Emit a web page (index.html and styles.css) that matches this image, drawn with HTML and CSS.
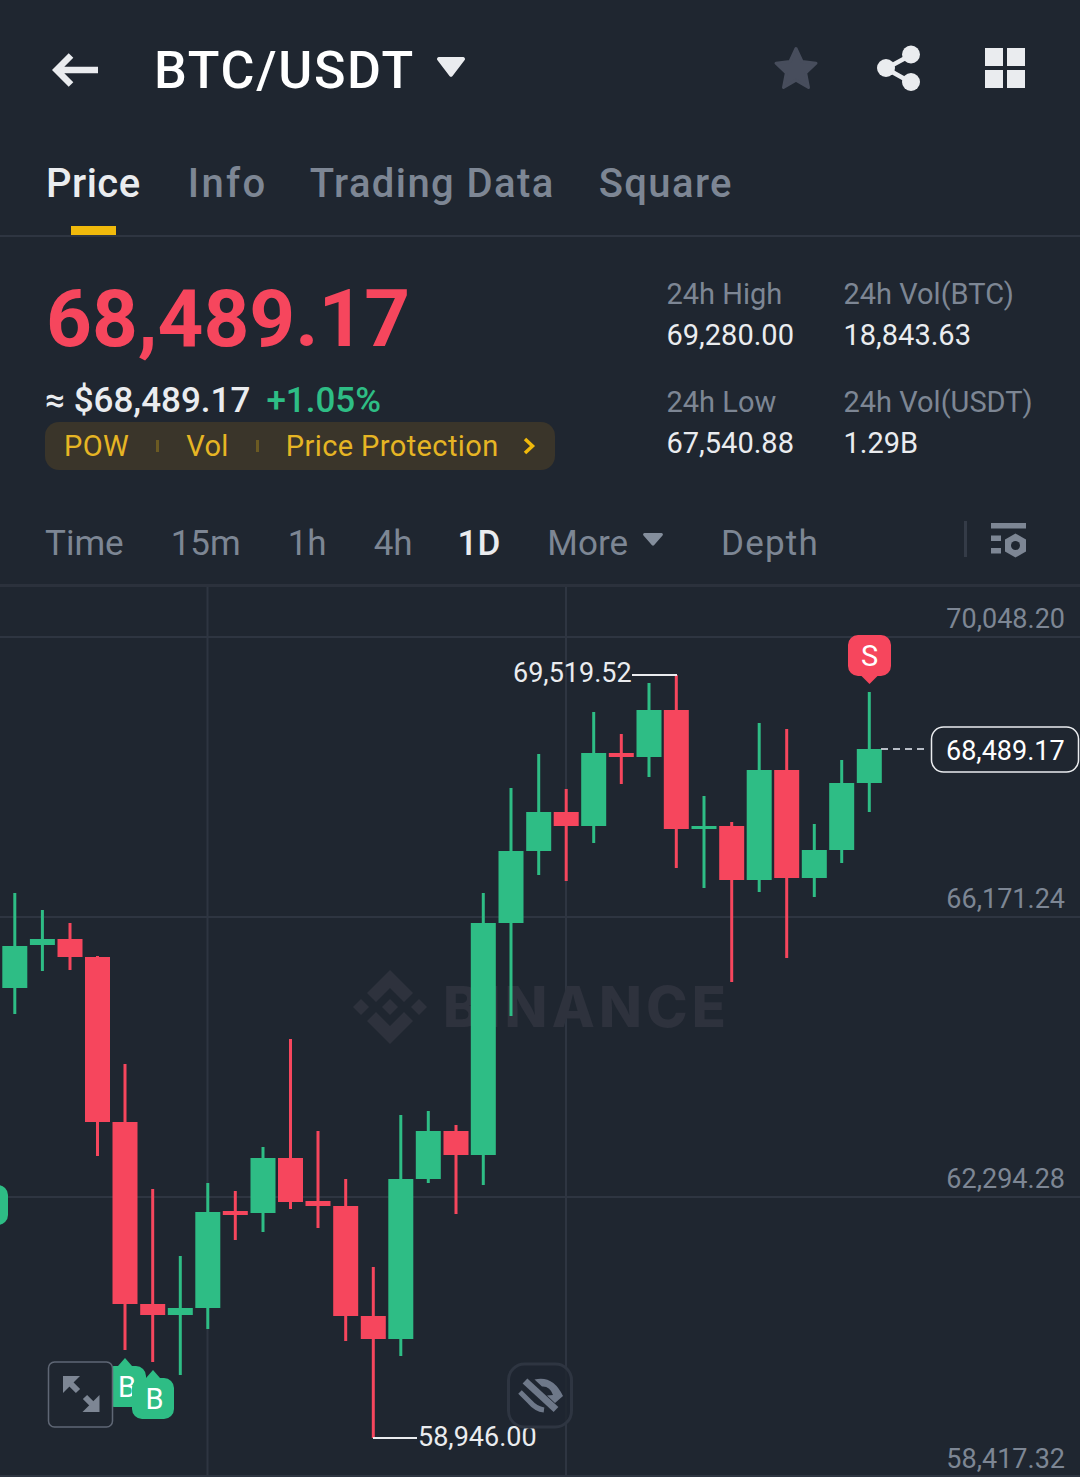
FILE: index.html
```html
<!DOCTYPE html>
<html lang="en">
<head>
    <meta charset="UTF-8">
    <meta name="viewport" content="width=device-width, initial-scale=1.0">
    <title>BTC/USDT</title>
    <link rel="stylesheet" href="styles.css">
</head>
<body>

    <!-- Top bar -->
    <header class="topbar">
        <svg class="icon-back" width="46" height="36" viewBox="0 0 46 36">
            <path d="M46 18H5M19 3.500 4.500 18 19 32.500" fill="none" stroke="#eaecef" stroke-width="6.500"/>
        </svg>
        <h1 class="pair">BTC/USDT</h1>
        <svg class="icon-caret" width="28" height="20" viewBox="0 0 28 20">
            <path d="M2 0h24a2 2 0 0 1 1.500 3.300L15.500 19a2 2 0 0 1-3 0L.5 3.300A2 2 0 0 1 2 0z" fill="#eaecef"/>
        </svg>
        <div class="top-actions">
            <svg width="46" height="46" viewBox="0 0 46 46">
                <path d="M23 3.500 29 16.500 43 18.200 32.700 28 35.500 42.500 23 35.300 10.500 42.500 13.300 28 3 18.200 17 16.500z" fill="#474d5c" stroke="#474d5c" stroke-width="3" stroke-linejoin="round"/>
            </svg>
            <svg width="44" height="46" viewBox="0 0 44 46">
                <path d="M34 10 9 23.500 34 37.500" fill="none" stroke="#eaecef" stroke-width="4.500"/>
                <circle cx="34" cy="9.500" r="9" fill="#eaecef"/>
                <circle cx="9" cy="23" r="9" fill="#eaecef"/>
                <circle cx="34" cy="37" r="9" fill="#eaecef"/>
            </svg>
            <div class="icon-grid"><span></span><span></span><span></span><span></span></div>
        </div>
    </header>

    <!-- Tabs -->
    <nav class="tabs">
        <a class="tab active">Price</a>
        <a class="tab tab-info">Info</a>
        <a class="tab">Trading Data</a>
        <a class="tab">Square</a>
    </nav>

    <!-- Price block -->
    <section class="summary">
        <div class="summary-left">
            <div class="last-price">68,489.17</div>
            <div class="fiat-line">
                <span class="fiat">≈ $68,489.17</span>
                <span class="change">+1.05%</span>
            </div>
            <div class="tags">
                <span>POW</span>
                <i class="tag-sep"></i>
                <span>Vol</span>
                <i class="tag-sep"></i>
                <span>Price Protection</span>
                <svg class="tag-arrow" width="14" height="18" viewBox="0 0 14 18">
                    <path d="M3 2l7.500 7L3 16" fill="none" stroke="#f0b90b" stroke-width="3.500"/>
                </svg>
            </div>
        </div>
        <div class="stats">
            <div class="stat"><span class="stat-label">24h High</span><span class="stat-value">69,280.00</span></div>
            <div class="stat"><span class="stat-label">24h Vol(BTC)</span><span class="stat-value">18,843.63</span></div>
            <div class="stat"><span class="stat-label">24h Low</span><span class="stat-value">67,540.88</span></div>
            <div class="stat"><span class="stat-label">24h Vol(USDT)</span><span class="stat-value">1.29B</span></div>
        </div>
    </section>

    <!-- Timeframes -->
    <div class="intervals">
        <a>Time</a>
        <a>15m</a>
        <a>1h</a>
        <a>4h</a>
        <a class="active">1D</a>
        <a class="more">More
            <svg width="20" height="13" viewBox="0 0 20 13">
                <path d="M1.500 0h17a1.500 1.500 0 0 1 1 2.500L11 12.300a1.500 1.500 0 0 1-2 0L.5 2.500A1.500 1.500 0 0 1 1.500 0z" fill="#848e9c"/>
            </svg>
        </a>
        <a class="depth">Depth</a>
        <i class="interval-sep"></i>
        <svg class="icon-settings" width="38" height="38" viewBox="0 0 38 38">
            <path d="M1 3h35v5.500H1zM1 15.500h10v5.500H1zM1 28h10v5.500H1z" fill="#7d8694"/>
            <path d="M25.500 13.500 36 19.500v12L25.500 37.500 15 31.500v-12z" fill="#7d8694"/>
            <circle cx="25.500" cy="25.500" r="4.500" fill="#1f2630"/>
        </svg>
    </div>

    <!-- Chart, viewBox uses page coordinates -->
    <svg class="chart" width="1080" height="890" viewBox="0 587 1080 890">
        <g class="grid">
            <path d="M0 637H1080M0 917H1080M0 1197H1080M0 1476H1080M207.500 585V1477M566 585V1477"/>
        </g>

        <g class="watermark" transform="translate(390 1007)">
            <path d="M0-37 23-14 14-5 0-19-14-5-23-14zM0 37 23 14 14 5 0 19-14 5-23 14zM0-8 8 0 0 8-8 0zM-29-8-21 0-29 8-37 0zM29-8 37 0 29 8 21 0z"/>
        </g>
        <text class="watermark-text" x="443" y="1027" textLength="283">BINANCE</text>

        <g class="up"><line x1="14.800" x2="14.800" y1="893" y2="1014"/><rect x="2.300" y="946" width="25" height="42"/></g>
        <g class="up"><line x1="42.400" x2="42.400" y1="910" y2="971"/><rect x="29.900" y="939" width="25" height="6"/></g>
        <g class="dn"><line x1="70" x2="70" y1="923" y2="970"/><rect x="57.500" y="939" width="25" height="18"/></g>
        <g class="dn"><line x1="97.500" x2="97.500" y1="956" y2="1156"/><rect x="85" y="957" width="25" height="165"/></g>
        <g class="dn"><line x1="125" x2="125" y1="1064" y2="1350"/><rect x="112.500" y="1122" width="25" height="182"/></g>
        <g class="dn"><line x1="152.700" x2="152.700" y1="1189" y2="1362"/><rect x="140.200" y="1304" width="25" height="11"/></g>
        <g class="up"><line x1="180.300" x2="180.300" y1="1256" y2="1375"/><rect x="167.800" y="1308" width="25" height="7"/></g>
        <g class="up"><line x1="207.800" x2="207.800" y1="1183" y2="1329"/><rect x="195.300" y="1212" width="25" height="96"/></g>
        <g class="dn"><line x1="235.300" x2="235.300" y1="1191" y2="1240"/><rect x="222.800" y="1211" width="25" height="4"/></g>
        <g class="up"><line x1="263" x2="263" y1="1147" y2="1232"/><rect x="250.500" y="1158" width="25" height="55"/></g>
        <g class="dn"><line x1="290.500" x2="290.500" y1="1039" y2="1209"/><rect x="278" y="1158" width="25" height="44"/></g>
        <g class="dn"><line x1="318" x2="318" y1="1131" y2="1228"/><rect x="305.500" y="1201" width="25" height="5"/></g>
        <g class="dn"><line x1="345.700" x2="345.700" y1="1179" y2="1341"/><rect x="333.200" y="1206" width="25" height="110"/></g>
        <g class="dn"><line x1="373.300" x2="373.300" y1="1267" y2="1438"/><rect x="360.800" y="1316" width="25" height="23"/></g>
        <g class="up"><line x1="400.800" x2="400.800" y1="1115" y2="1356"/><rect x="388.300" y="1179" width="25" height="160"/></g>
        <g class="up"><line x1="428.300" x2="428.300" y1="1111" y2="1183"/><rect x="415.800" y="1131" width="25" height="48"/></g>
        <g class="dn"><line x1="456" x2="456" y1="1125" y2="1214"/><rect x="443.500" y="1131" width="25" height="24"/></g>
        <g class="up"><line x1="483.300" x2="483.300" y1="893" y2="1185"/><rect x="470.800" y="923" width="25" height="232"/></g>
        <g class="up"><line x1="511" x2="511" y1="788" y2="1016"/><rect x="498.500" y="851" width="25" height="72"/></g>
        <g class="up"><line x1="538.700" x2="538.700" y1="754" y2="875"/><rect x="526.200" y="812" width="25" height="39"/></g>
        <g class="dn"><line x1="566.200" x2="566.200" y1="789" y2="881"/><rect x="553.700" y="812" width="25" height="14"/></g>
        <g class="up"><line x1="593.700" x2="593.700" y1="712" y2="843"/><rect x="581.200" y="753" width="25" height="73"/></g>
        <g class="dn"><line x1="621.300" x2="621.300" y1="734" y2="784"/><rect x="608.800" y="753" width="25" height="4"/></g>
        <g class="up"><line x1="649" x2="649" y1="683" y2="777"/><rect x="636.500" y="710" width="25" height="47"/></g>
        <g class="dn"><line x1="676.300" x2="676.300" y1="675" y2="868"/><rect x="663.800" y="710" width="25" height="119"/></g>
        <g class="up"><line x1="704" x2="704" y1="796" y2="888"/><rect x="691.500" y="826" width="25" height="3"/></g>
        <g class="dn"><line x1="731.700" x2="731.700" y1="822" y2="982"/><rect x="719.200" y="826" width="25" height="54"/></g>
        <g class="up"><line x1="759.200" x2="759.200" y1="723" y2="892"/><rect x="746.700" y="770" width="25" height="110"/></g>
        <g class="dn"><line x1="786.700" x2="786.700" y1="729" y2="958"/><rect x="774.200" y="770" width="25" height="108"/></g>
        <g class="up"><line x1="814.300" x2="814.300" y1="824" y2="897"/><rect x="801.800" y="850" width="25" height="28"/></g>
        <g class="up"><line x1="841.700" x2="841.700" y1="760" y2="863"/><rect x="829.200" y="783" width="25" height="67"/></g>
        <g class="up"><line x1="869.300" x2="869.300" y1="692" y2="812"/><rect x="856.800" y="749" width="25" height="34"/></g>

        <!-- Axis labels -->
        <text class="axis" x="1065" y="628">70,048.20</text>
        <text class="axis" x="1065" y="908">66,171.24</text>
        <text class="axis" x="1065" y="1188">62,294.28</text>
        <text class="axis" x="1065" y="1468">58,417.32</text>

        <!-- High and low -->
        <path class="hl-line" d="M632 675H677M373 1438H417"/>
        <text class="hl" x="513" y="682">69,519.52</text>
        <text class="hl" x="418" y="1446">58,946.00</text>

        <!-- Last price -->
        <path class="last-dash" d="M881 749H925"/>
        <rect class="last-box" x="931.500" y="727" width="147" height="45" rx="12"/>
        <text class="last-text" x="946" y="760">68,489.17</text>

        <!-- Trade markers -->
        <rect class="mark-up" x="-30" y="1185" width="38" height="40" rx="10"/>
        <path class="mark-dn" d="M858 635h23a10 10 0 0 1 10 10v21a10 10 0 0 1-10 10h-3.500l-8 8-8-8H858a10 10 0 0 1-10-10v-21a10 10 0 0 1 10-10z"/>
        <text class="mark-text" x="869.500" y="666">S</text>
        <path class="mark-up" d="M114 1366h4l7-8 7 8h4a10 10 0 0 1 10 10v21a10 10 0 0 1-10 10h-22a10 10 0 0 1-10-10v-21a10 10 0 0 1 10-10z"/>
        <text class="mark-text" x="127" y="1397">B</text>
        <path class="mark-up" d="M142 1378h4l7-8 7 8h4a10 10 0 0 1 10 10v21a10 10 0 0 1-10 10h-22a10 10 0 0 1-10-10v-21a10 10 0 0 1 10-10z"/>
        <text class="mark-text" x="154.500" y="1409">B</text>

        <!-- Fullscreen button -->
        <rect class="btn-full" x="48.500" y="1362" width="64" height="65" rx="6"/>
        <path class="btn-icon" d="M63 1376h17l-17 17zM99.500 1412h-17l17-17z"/>
        <path class="btn-stroke" d="M71 1384 78 1391M85 1397 92 1404"/>

        <!-- Hide button -->
        <rect class="btn-hide" x="508.500" y="1364" width="63" height="63" rx="16"/>
        <path class="hide-stroke" d="M525 1381 556 1409.500"/>
        <path class="hide-icon" d="M534.500 1379.500Q553 1375 563 1396L555 1403 547 1395.500 553 1395Q550 1386 542 1386.500z"/>
        <path class="hide-thin" d="M520 1392 530 1402Q536 1409 544 1410"/>
    </svg>

</body>
</html>
```

FILE: styles.css
```css
* {
    box-sizing: border-box;
}

body {
    margin: 0;
    width: 1080px;
    height: 1477px;
    overflow: hidden;
    background-color: #1f2630;
    font-family: Roboto, "Liberation Sans", sans-serif;
    color: #eaecef;
}

.topbar {
    display: flex;
    align-items: center;
    height: 140px;
    padding: 0 55px 0 52px;
}

.icon-back {
    margin-right: 56px;
}

.pair {
    margin: 0;
    font-size: 52px;
    font-weight: 500;
    letter-spacing: 1.700px;
    color: #fff;
}

.icon-caret {
    margin: -6px 0 0 22px;
}

.top-actions {
    display: flex;
    align-items: center;
    gap: 58px;
    margin: -4px 0 0 auto;
}

.icon-grid {
    display: grid;
    grid-template-columns: 18px 18px;
    grid-template-rows: 18px 18px;
    gap: 4px;
    margin-left: 6px;
}

.icon-grid span {
    background-color: #eaecef;
}

.tabs {
    display: flex;
    gap: 44px;
    height: 97px;
    padding-left: 46px;
    border-bottom: 2px solid #2e3541;
}

.tab {
    position: relative;
    font-size: 40px;
    font-weight: 500;
    letter-spacing: 1.400px;
    line-height: 88px;
    color: #7d8694;
}

.tab-info {
    margin-right: -2px;
    letter-spacing: 2.400px;
}

.tab.active {
    margin-right: 3px;
    letter-spacing: 0.500px;
    color: #eaecef;
}

.tab.active::after {
    content: "";
    position: absolute;
    left: 25px;
    bottom: 0;
    width: 45px;
    height: 9px;
    background-color: #f0b90b;
}

.summary {
    display: flex;
    justify-content: space-between;
    height: 248px;
    padding: 0 46.500px 0 45px;
}

.last-price {
    margin: 38px 0 0 1px;
    font-size: 80px;
    font-weight: 700;
    line-height: 88px;
    color: #f6465d;
}

.fiat-line {
    display: flex;
    gap: 16px;
    margin-top: 17px;
    font-size: 35px;
    font-weight: 500;
    line-height: 42px;
}

.change {
    color: #2ebd85;
}

.tags {
    display: flex;
    align-items: center;
    gap: 27px;
    width: 510px;
    height: 48px;
    margin-top: 0;
    padding-left: 19px;
    border-radius: 14px;
    background-color: #3a352a;
    font-size: 29px;
    letter-spacing: 0.400px;
    color: #e6b524;
}

.tag-sep {
    width: 3px;
    height: 12px;
    background-color: #6b5a22;
}

.tag-arrow {
    margin-left: -4px;
}

.stats {
    display: grid;
    grid-template-columns: 177px 190px;
    grid-auto-rows: 108px;
    margin-top: 42px;
}

.stat {
    display: flex;
    flex-direction: column;
    gap: 11px;
    font-size: 29px;
    line-height: 30px;
}

.stat-label {
    color: #7d8694;
}

.intervals {
    display: flex;
    align-items: center;
    gap: 47px;
    height: 102px;
    padding: 17px 52.500px 0 45px;
    border-bottom: 3px solid #2b313c;
    font-size: 35px;
    color: #7d8694;
}

.intervals .active {
    margin-left: -2px;
    font-weight: 500;
    color: #eaecef;
}

.more {
    display: flex;
    align-items: center;
    gap: 15px;
}

.more svg {
    margin-top: -8px;
}

.depth {
    margin-left: 11px;
    letter-spacing: 1.200px;
}

.interval-sep {
    width: 3px;
    height: 36px;
    margin-left: auto;
    margin-top: -8px;
    background-color: #343b47;
}

.icon-settings {
    margin: -8px 0 0 -24.500px;
}

.chart {
    display: block;
}

.grid path {
    fill: none;
    stroke: #2e3541;
    stroke-width: 2;
}

.watermark path {
    fill: #2e323d;
}

.watermark-text {
    font-family: Inter, Roboto, sans-serif;
    font-size: 56px;
    font-weight: 800;
    fill: #2e323d;
}

.up rect {
    fill: #2ebd85;
}

.up line {
    stroke: #2ebd85;
    stroke-width: 3;
}

.dn rect {
    fill: #f6465d;
}

.dn line {
    stroke: #f6465d;
    stroke-width: 3;
}

.axis {
    font-size: 27px;
    text-anchor: end;
    fill: #7d8694;
}

.hl {
    font-size: 27px;
    fill: #eaecef;
}

.hl-line {
    fill: none;
    stroke: #eaecef;
    stroke-width: 2;
}

.last-dash {
    fill: none;
    stroke: #b7bdc6;
    stroke-width: 2;
    stroke-dasharray: 7 5;
}

.last-box {
    fill: #1f2630;
    stroke: #eaecef;
    stroke-width: 1.500;
}

.last-text {
    font-size: 27px;
    fill: #fff;
}

.mark-up {
    fill: #2ebd85;
}

.mark-dn {
    fill: #f6465d;
}

.mark-text {
    font-size: 29px;
    text-anchor: middle;
    fill: #fff;
}

.btn-full {
    fill: #1f2630;
    stroke: #5f6775;
    stroke-width: 1.500;
}

.btn-icon {
    fill: #7d8694;
}

.btn-stroke {
    fill: none;
    stroke: #7d8694;
    stroke-width: 6;
}

.btn-hide {
    fill: #1f2630;
    fill-opacity: 0.85;
    stroke: #2e3541;
    stroke-width: 3;
}

.hide-stroke {
    fill: none;
    stroke: #6e7889;
    stroke-width: 7;
}

.hide-icon {
    fill: #6e7889;
}

.hide-thin {
    fill: none;
    stroke: #6e7889;
    stroke-width: 5;
}
```
